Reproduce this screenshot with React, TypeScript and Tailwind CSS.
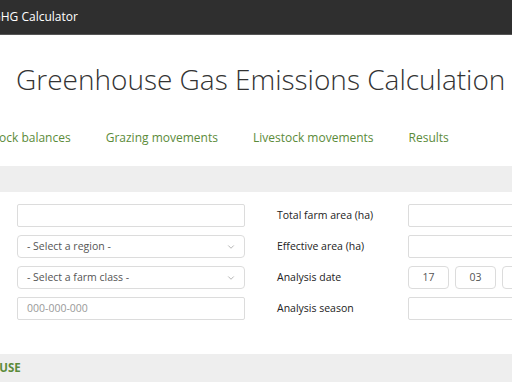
import React from 'react';
import { ChevronDown } from 'lucide-react';

const font = { fontFamily: '"Open Sans", "Liberation Sans", sans-serif' };

const TextInput = ({ placeholder = '', value = '' }: { placeholder?: string; value?: string }) => (
  <div className="h-[23px] w-[228px] border border-[#dcdcdc] rounded-[2px] px-[9px] flex items-center text-[10.5px] text-[#555]">
    {value ? value : <span className="text-[#999]">{placeholder}</span>}
  </div>
);

const SelectBox = ({ label }: { label: string }) => (
  <div className="h-[23px] w-[228px] border border-[#dcdcdc] rounded-[4px] pl-[9px] pr-[8px] flex items-center justify-between text-[10.5px] text-[#555]">
    <span>{label}</span>
    <ChevronDown className="w-[10px] h-[10px] text-[#888]" strokeWidth={1.5} />
  </div>
);

const Label = ({ children }: { children: React.ReactNode }) => (
  <div className="w-[131px] h-[23px] flex items-center text-[10.5px] font-medium text-[#222]">{children}</div>
);

const App: React.FC = () => {
  return (
    <div className="w-[512px] h-[382px] overflow-hidden bg-white" style={font}>
      <header className="h-[35px] bg-[#2f2f2f] border-b border-[#555] flex items-center">
        <span className="ml-[-8px] text-white text-[12px]">GHG Calculator</span>
      </header>

      <h1 className="mt-[26px] ml-[16px] text-[28px] font-light text-[#333] leading-[36px] whitespace-nowrap">
        Greenhouse Gas Emissions Calculation
      </h1>

      <nav className="mt-[32px] flex gap-[35px] ml-[-33px] text-[12px] text-[#5b8b3a] whitespace-nowrap leading-[18px]">
        <span>Livestock balances</span>
        <span>Grazing movements</span>
        <span>Livestock movements</span>
        <span>Results</span>
      </nav>

      <div className="mt-[19px] h-[26px] bg-[#eeeeee]" />

      <div className="mt-[12px] flex">
        <div className="ml-[17px] flex flex-col gap-[8px]">
          <TextInput />
          <SelectBox label="- Select a region -" />
          <SelectBox label="- Select a farm class -" />
          <TextInput placeholder="000-000-000" />
        </div>
        <div className="ml-[32px] flex flex-col gap-[8px]">
          <Label>Total farm area (ha)</Label>
          <Label>Effective area (ha)</Label>
          <Label>Analysis date</Label>
          <Label>Analysis season</Label>
        </div>
        <div className="flex flex-col gap-[8px]">
          <div className="h-[23px] w-[200px] border border-[#dcdcdc] rounded-[2px]" />
          <div className="h-[23px] w-[200px] border border-[#dcdcdc] rounded-[2px]" />
          <div className="flex gap-[6px]">
            <div className="h-[23px] w-[41px] shrink-0 border border-[#dcdcdc] rounded-[4px] flex items-center justify-center text-[10.5px] text-[#555]">17</div>
            <div className="h-[23px] w-[41px] shrink-0 border border-[#dcdcdc] rounded-[4px] flex items-center justify-center text-[10.5px] text-[#555]">03</div>
            <div className="h-[23px] w-[60px] shrink-0 border border-[#dcdcdc] rounded-[4px] flex items-center justify-center text-[10.5px] text-[#555]">2024</div>
          </div>
          <div className="h-[23px] w-[200px] border border-[#dcdcdc] rounded-[2px]" />
        </div>
      </div>

      <div className="mt-[34px] h-[28px] bg-[#eeeeee] flex items-center">
        <span className="ml-[-36px] text-[11.5px] font-bold text-[#5b8b3a]">LAND USE</span>
      </div>
    </div>
  );
};

export default App;
